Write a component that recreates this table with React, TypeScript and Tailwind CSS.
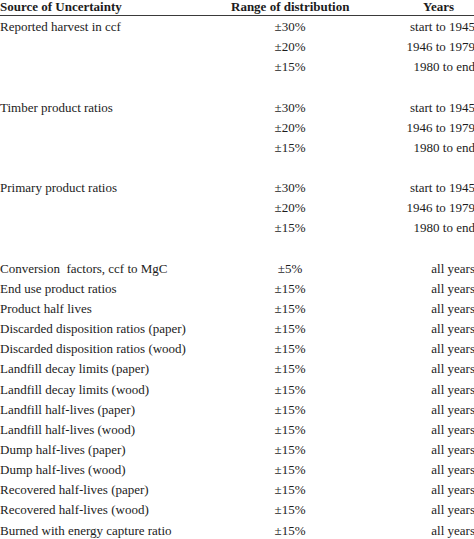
const groups = [
  { source: "Reported harvest in ccf" },
  { source: "Timber product ratios" },
  { source: "Primary product ratios" },
];

const spans = [
  { range: "±30%", years: "start to 1945" },
  { range: "±20%", years: "1946 to 1979" },
  { range: "±15%", years: "1980 to end" },
];

const singles = [
  { source: "Conversion  factors, ccf to MgC", range: "±5%" },
  { source: "End use product ratios", range: "±15%" },
  { source: "Product half lives", range: "±15%" },
  { source: "Discarded disposition ratios (paper)", range: "±15%" },
  { source: "Discarded disposition ratios (wood)", range: "±15%" },
  { source: "Landfill decay limits (paper)", range: "±15%" },
  { source: "Landfill decay limits (wood)", range: "±15%" },
  { source: "Landfill half-lives (paper)", range: "±15%" },
  { source: "Landfill half-lives (wood)", range: "±15%" },
  { source: "Dump half-lives (paper)", range: "±15%" },
  { source: "Dump half-lives (wood)", range: "±15%" },
  { source: "Recovered half-lives (paper)", range: "±15%" },
  { source: "Recovered half-lives (wood)", range: "±15%" },
  { source: "Burned with energy capture ratio", range: "±15%" },
];

const Row = ({ source, range, years }: { source?: string; range?: string; years?: string }) => (
  <div className="grid grid-cols-[231px_118px_126px] h-[20.15px] leading-[20.15px]">
    <span className="whitespace-pre">{source ?? ""}</span>
    <span className="text-center whitespace-nowrap">{range ?? ""}</span>
    <span className="text-right whitespace-nowrap">{years ?? ""}</span>
  </div>
);

const App = () => {
  return (
    <div className="w-[474px] h-[539px] overflow-hidden bg-white text-[#1c1c1c] text-[13px] font-['Liberation_Serif','Times_New_Roman',serif]">
      <div className="w-[475px]">
        {/* Header */}
        <div className="grid grid-cols-[231px_118px_126px] h-[15.5px] leading-[14px] font-bold border-b-[1.5px] border-[#3a3a3a] whitespace-nowrap">
          <span>Source of Uncertainty</span>
          <span className="text-center">Range of distribution</span>
          <span className="text-right pr-[21px]">Years</span>
        </div>

        <div className="pt-[1.5px]">
          {/* Grouped rows with period ranges */}
          {groups.map((g) => (
            <div key={g.source}>
              {spans.map((s, i) => (
                <Row key={s.years} source={i === 0 ? g.source : undefined} range={s.range} years={s.years} />
              ))}
              <Row />
            </div>
          ))}

          {/* Single rows */}
          {singles.map((r) => (
            <Row key={r.source} source={r.source} range={r.range} years="all years" />
          ))}
        </div>
      </div>
    </div>
  );
};

export default App;
